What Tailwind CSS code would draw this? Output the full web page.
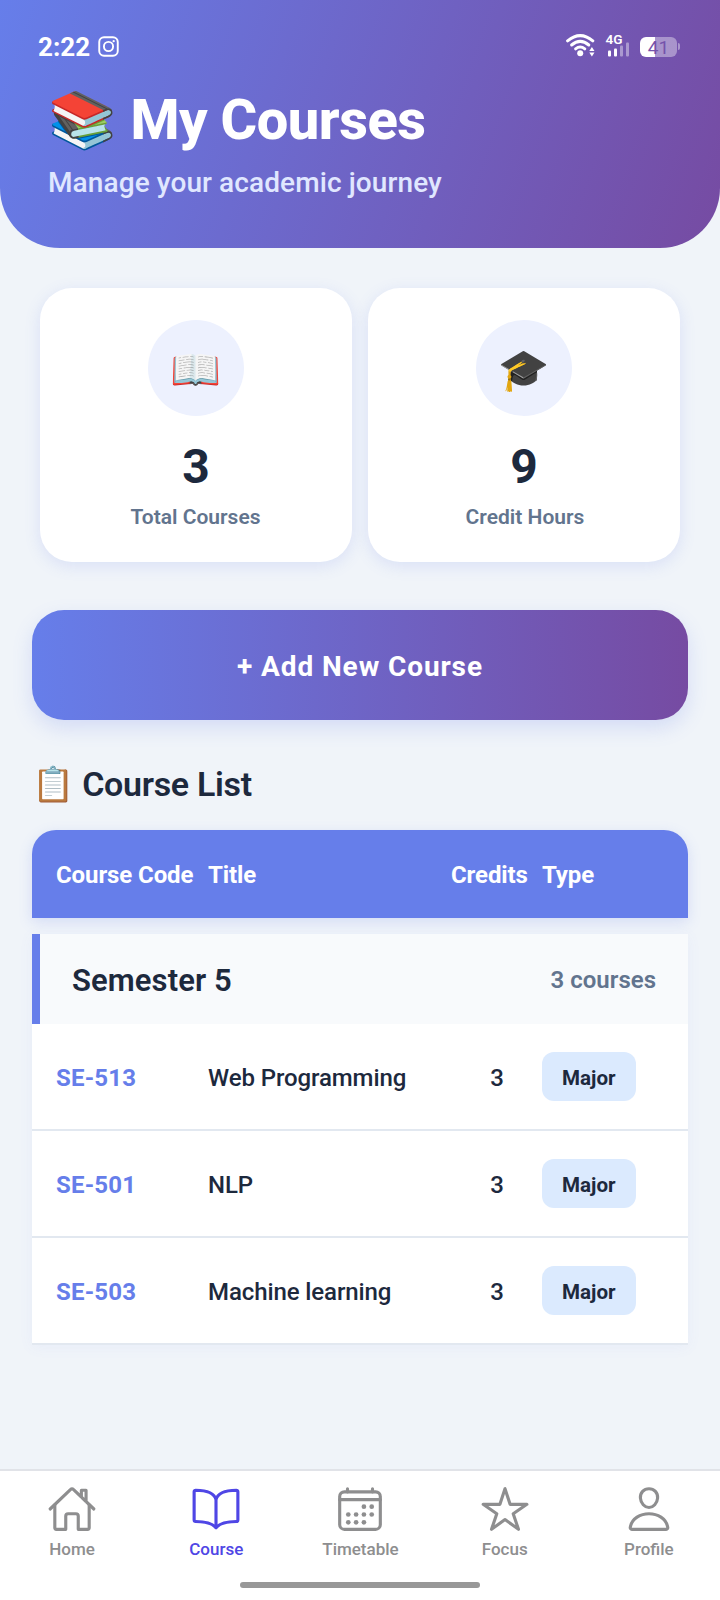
<!DOCTYPE html>
<html lang="en">
<head>
    <meta charset="UTF-8">
    <meta name="viewport" content="width=device-width, initial-scale=1.0">
    <title>My Courses</title>
    <script src="https://cdn.jsdelivr.net/npm/@tailwindcss/browser@4"></script>
</head>
<body class="bg-[#f0f4f9] font-['Roboto',sans-serif] text-slate-800">
    <div class="w-[720px] h-[1600px] flex flex-col overflow-hidden">
        <header class="h-[248px] shrink-0 rounded-b-[60px] bg-[linear-gradient(109deg,#667eea,#764ba2)] text-white">
            <!-- Status bar -->
            <div class="flex items-center justify-between h-[88px] pt-[6px] pl-[38px] pr-[40px]">
                <div class="flex items-center gap-2">
                    <span class="text-[26px] leading-8 font-bold">2:22</span>
                    <svg class="w-[21px] h-[21px] -mt-[1px]" viewBox="0 0 22 22" fill="none" stroke="currentColor" stroke-width="2">
                        <rect x="1.3" y="1.3" width="19.4" height="19.4" rx="5"/>
                        <circle cx="11" cy="11" r="4.8"/>
                        <circle cx="16.4" cy="5.4" r="1.2" fill="currentColor" stroke="none"/>
                    </svg>
                </div>
                <div class="flex items-center -mt-[3px]">
                    <svg class="w-[29px] h-[23px]" viewBox="0 0 29 23" fill="none" stroke="currentColor" stroke-width="3" stroke-linecap="round">
                        <path d="M1.6 6.8Q14.2-3.6 26.8 6.8"/>
                        <path d="M5.6 11Q14.2 3.8 22.8 11"/>
                        <path d="M9.6 14.9Q14.2 11.2 18.8 14.9"/>
                        <circle cx="14.2" cy="19.3" r="3" fill="currentColor" stroke="none"/>
                        <path d="M25.9 13l2.6 4h-5.2zM25.9 22.6l2.6-4h-5.2z" fill="currentColor" stroke="none"/>
                    </svg>
                    <svg class="w-[24px] h-[23px] ml-[11px] overflow-visible" viewBox="0 0 24 23" fill="currentColor">
                        <text x="-0.5" y="10" font-size="13.6" font-weight="600">4G</text>
                        <rect x="2" y="16.5" width="3" height="6" rx="1"/>
                        <rect x="8" y="14.5" width="3" height="8" rx="1"/>
                        <rect x="14" y="11.5" width="3" height="11" rx="1" opacity=".4"/>
                        <rect x="20" y="8.5" width="3" height="14" rx="1" opacity=".4"/>
                    </svg>
                    <div class="flex items-center ml-[10px] mt-[2px]">
                        <div class="w-[37px] h-[20px] rounded-[6px] bg-[linear-gradient(90deg,#fff_15px,rgba(255,255,255,0.38)_15px)] text-[#7552ab] text-[19px] leading-[21px] text-center">41</div>
                        <div class="w-[2px] h-[7px] ml-[1px] rounded-r bg-white/40"></div>
                    </div>
                </div>
            </div>
            <div class="px-12">
                <h1 class="flex text-[56px] leading-[64px] font-extrabold tracking-[-0.5px] whitespace-pre"><span class="w-[69px] text-[55px]">📚</span> My Courses</h1>
                <p class="mt-[14px] pt-[1px] text-[28px] leading-8 font-medium tracking-[0.1px] text-[#e0e7ff]">Manage your academic journey</p>
            </div>
        </header>

        <main class="flex-1 px-8 pt-10">
            <!-- Stats -->
            <div class="grid grid-cols-2 gap-4 px-2 text-center">
                <div class="h-[274px] pt-8 flex flex-col items-center rounded-[32px] bg-white shadow-[0_4px_16px_rgba(102,126,234,0.16)]">
                    <div class="w-24 h-24 pt-[5px] pr-[1px] rounded-full bg-[#edf1fe] flex items-center justify-center text-[41px]">📖</div>
                    <p class="mt-[23px] text-[48px] leading-[56px] font-bold">3</p>
                    <p class="mt-[10px] pr-[1px] text-[21px] leading-6 font-semibold text-slate-500">Total Courses</p>
                </div>
                <div class="h-[274px] pt-8 flex flex-col items-center rounded-[32px] bg-white shadow-[0_4px_16px_rgba(102,126,234,0.16)]">
                    <div class="w-24 h-24 pt-[5px] pr-[1px] rounded-full bg-[#edf1fe] flex items-center justify-center text-[41px]">🎓</div>
                    <p class="mt-[23px] text-[48px] leading-[56px] font-bold">9</p>
                    <p class="mt-[10px] pl-[2px] text-[21px] leading-6 font-semibold text-slate-500">Credit Hours</p>
                </div>
            </div>

            <button class="block w-full h-[110px] mt-12 pt-[3px] rounded-[32px] bg-linear-to-r/srgb from-[#667eea] to-[#764ba2] text-white text-[28px] font-bold tracking-[0.9px] shadow-[0_8px_20px_rgba(102,126,234,0.2)]">+ Add New Course</button>

            <h2 class="flex mt-11 text-[34px] leading-10 font-semibold tracking-[-0.3px] whitespace-pre"><span class="w-[42px]">📋</span> Course List</h2>

            <!-- Course table -->
            <div class="mt-[26px]">
                <div class="grid grid-cols-[152px_243px_91px_1fr] items-center h-[88px] px-6 pt-[2px] rounded-t-3xl bg-[#667eea] text-white text-2xl font-bold tracking-[-0.1px] shadow-[0_4px_14px_rgba(102,126,234,0.2)]">
                    <span>Course Code</span>
                    <span>Title</span>
                    <span>Credits</span>
                    <span>Type</span>
                </div>
                <div class="mt-4 shadow-[0_2px_14px_rgba(102,126,234,0.06)]">
                    <div class="flex items-center justify-between h-[90px] px-8 pt-[2px] bg-slate-50 border-l-8 border-[#667eea]">
                        <span class="pt-[2px] text-[31px] font-semibold tracking-[0.1px]">Semester 5</span>
                        <span class="text-2xl font-semibold text-slate-500">3 courses</span>
                    </div>
                    <div class="grid grid-cols-[152px_243px_91px_1fr] items-center h-[107px] px-6 bg-white border-b-2 border-slate-200 text-2xl font-medium">
                        <span class="pt-[2px] font-bold tracking-[0.2px] text-[#667eea]">SE-513</span>
                        <span class="pt-[2px] tracking-[-0.1px]">Web Programming</span>
                        <span class="pt-[2px] pl-[1px] text-center">3</span>
                        <span class="justify-self-start h-[49px] px-5 pt-[2px] rounded-xl bg-blue-100 text-[20.6px] leading-[49px] font-bold">Major</span>
                    </div>
                    <div class="grid grid-cols-[152px_243px_91px_1fr] items-center h-[107px] px-6 bg-white border-b-2 border-slate-200 text-2xl font-medium">
                        <span class="pt-[2px] font-bold tracking-[0.2px] text-[#667eea]">SE-501</span>
                        <span class="pt-[2px] tracking-[-0.1px]">NLP</span>
                        <span class="pt-[2px] pl-[1px] text-center">3</span>
                        <span class="justify-self-start h-[49px] px-5 pt-[2px] rounded-xl bg-blue-100 text-[20.6px] leading-[49px] font-bold">Major</span>
                    </div>
                    <div class="grid grid-cols-[152px_243px_91px_1fr] items-center h-[107px] px-6 bg-white border-b-2 border-slate-200 text-2xl font-medium">
                        <span class="pt-[2px] font-bold tracking-[0.2px] text-[#667eea]">SE-503</span>
                        <span class="pt-[2px] tracking-[-0.1px]">Machine learning</span>
                        <span class="pt-[2px] pl-[1px] text-center">3</span>
                        <span class="justify-self-start h-[49px] px-5 pt-[2px] rounded-xl bg-blue-100 text-[20.6px] leading-[49px] font-bold">Major</span>
                    </div>
                </div>
            </div>
        </main>

        <!-- Bottom navigation -->
        <nav class="h-[131px] shrink-0 bg-white border-t-2 border-[#e1e3e8] text-[#8e8e8f]">
            <div class="grid grid-cols-5 pt-[13px] -mr-[1px] text-[17px] leading-5 font-medium">
                <a class="flex flex-col items-center gap-[5px]">
                    <svg class="w-[50px] h-[50px]" viewBox="0 0 512 512" fill="none" stroke="currentColor" stroke-width="32" stroke-linecap="round" stroke-linejoin="round">
                        <path d="M80 212v236a16 16 0 0016 16h96V328a24 24 0 0124-24h80a24 24 0 0124 24v136h96a16 16 0 0016-16V212"/>
                        <path d="M480 256L266.89 52c-5-5.28-16.69-5.34-21.78 0L32 256M400 179V64h-48v69"/>
                    </svg>
                    Home
                </a>
                <a class="flex flex-col items-center gap-[5px] text-[#4f46e5]">
                    <svg class="w-[50px] h-[50px]" viewBox="0 0 512 512" fill="none" stroke="currentColor" stroke-width="32" stroke-linecap="round" stroke-linejoin="round">
                        <path d="M256 160c16-63.16 76.43-95.41 208-96a15.94 15.94 0 0116 16v288a16 16 0 01-16 16c-128 0-177.45 25.81-208 64-30.37-38-80-64-208-64-9.88 0-16-8.05-16-17.93V80a15.94 15.94 0 0116-16c131.57.59 192 32.84 208 96zM256 160v288"/>
                    </svg>
                    Course
                </a>
                <a class="flex flex-col items-center gap-[5px]">
                    <svg class="w-[50px] h-[50px]" viewBox="0 0 512 512" fill="none" stroke="currentColor" stroke-width="32" stroke-linecap="round" stroke-linejoin="round">
                        <rect x="48" y="80" width="416" height="384" rx="48"/>
                        <path d="M128 48v32M384 48v32M464 160H48"/>
                        <g fill="currentColor" stroke="none">
                            <circle cx="296" cy="232" r="24"/>
                            <circle cx="376" cy="232" r="24"/>
                            <circle cx="136" cy="312" r="24"/>
                            <circle cx="216" cy="312" r="24"/>
                            <circle cx="296" cy="312" r="24"/>
                            <circle cx="376" cy="312" r="24"/>
                            <circle cx="136" cy="392" r="24"/>
                            <circle cx="216" cy="392" r="24"/>
                            <circle cx="296" cy="392" r="24"/>
                        </g>
                    </svg>
                    Timetable
                </a>
                <a class="flex flex-col items-center gap-[5px]">
                    <svg class="w-[50px] h-[50px]" viewBox="0 0 512 512" fill="none" stroke="currentColor" stroke-width="32" stroke-linejoin="round">
                        <path d="M480 208H308L256 48l-52 160H32l140 96-54 160 138-100 138 100-54-160z"/>
                    </svg>
                    Focus
                </a>
                <a class="flex flex-col items-center gap-[5px]">
                    <svg class="w-[50px] h-[50px]" viewBox="0 0 512 512" fill="none" stroke="currentColor" stroke-width="32" stroke-linejoin="round">
                        <path d="M344 144c-3.92 52.87-44 96-88 96s-84.15-43.12-88-96c-4-55 35-96 88-96s92 42 88 96z"/>
                        <path d="M256 304c-87 0-175.3 48-191.64 138.6C62.39 453.52 68.57 464 80 464h352c11.44 0 17.62-10.48 15.65-21.4C431.3 352 343 304 256 304z"/>
                    </svg>
                    Profile
                </a>
            </div>
            <div class="w-60 h-[6px] mx-auto mt-[23px] rounded-full bg-[#989898]"></div>
        </nav>
    </div>
</body>
</html>
